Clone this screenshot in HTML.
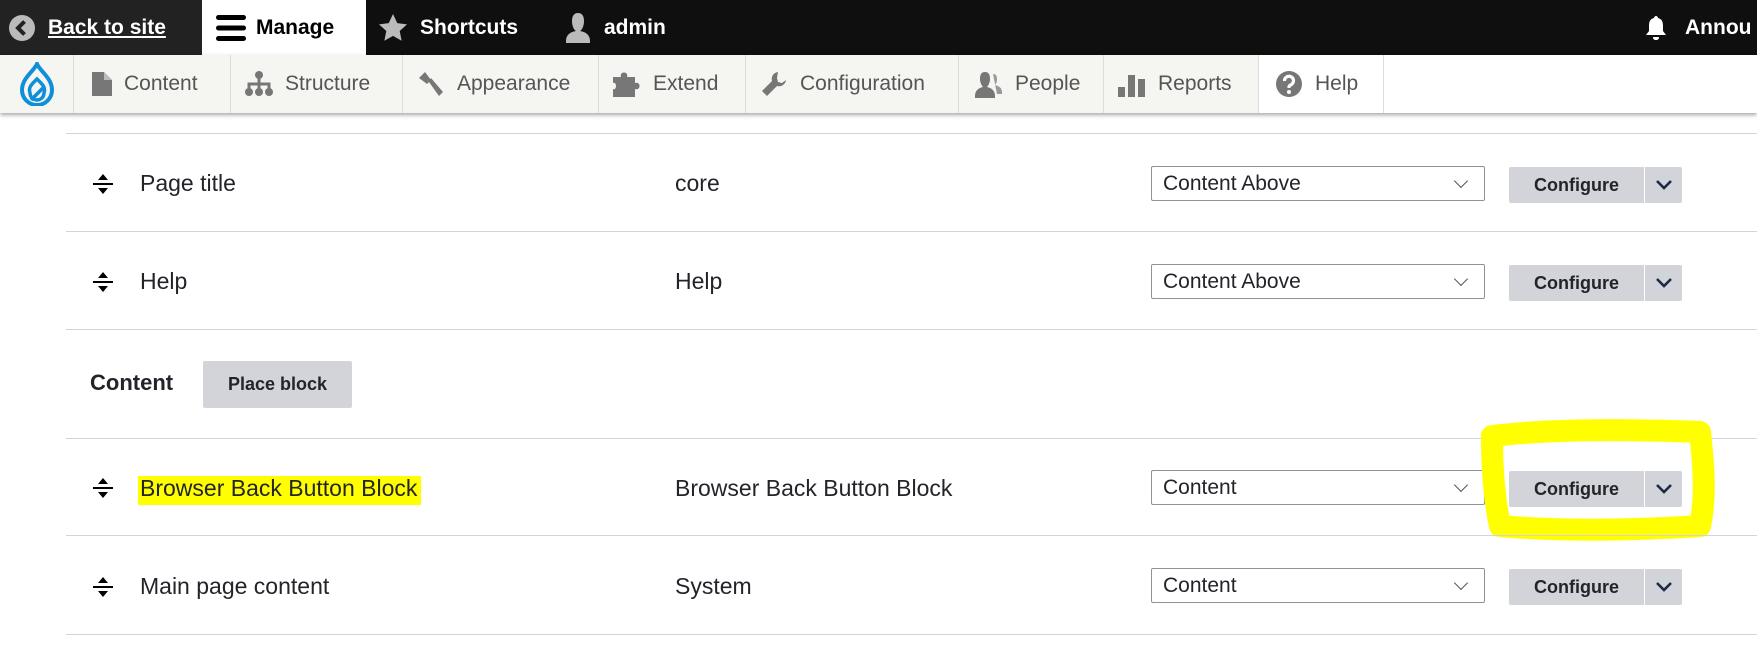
<!DOCTYPE html>
<html><head><meta charset="utf-8"><style>
*{box-sizing:border-box;margin:0;padding:0}
body{width:1757px;height:649px;overflow:hidden;background:#fff;font-family:"Liberation Sans",sans-serif;position:relative;color:#232429}
.abs{position:absolute}
.top{left:0;top:0;width:1757px;height:55px;background:#0f0f0f}
.tb{position:absolute;top:0;height:55px;display:flex;align-items:center;color:#fff;font-weight:bold;font-size:21px}
.nav{left:0;top:55px;width:1757px;height:58px;background:#fff;box-shadow:0 2px 4px rgba(0,0,0,.35)}
.ni{position:absolute;top:55px;height:58px;background:#f5f5f2;border-right:1px solid #ddd;display:flex;align-items:center;color:#555;font-size:21px}
.ni svg{margin-right:12px}
.line{left:66px;width:1691px;height:1px;background:#d4d4d8}
.lab{font-size:23px;color:#232429}
.sel{width:334px;height:35px;border:1px solid #8e929c;border-radius:2px;font-size:21px;padding-left:11px;display:flex;align-items:center;color:#232429}
.sel:after{content:"";position:absolute;right:18px;top:9px;width:9px;height:9px;border-right:1.5px solid #555;border-bottom:1.5px solid #555;transform:rotate(45deg)}
.btn{width:173px;height:36px;background:#d3d4d9;border-radius:2px;font-weight:bold;font-size:18px;display:flex;align-items:center}
.btn .c{width:136px;text-align:center;border-right:1px solid #fff;height:36px;line-height:36px}
.btn .d{flex:1;display:flex;justify-content:center}
.drag{width:20px;height:22px}
</style></head><body>
<div class="abs top"></div>
<div class="tb" style="left:0;width:202px;background:#222;padding-left:8px">
<svg width="28" height="28" viewBox="0 0 28 28"><circle cx="14" cy="14" r="13" fill="#bbb"/><path d="M16.5 7.5 L10 14 L16.5 20.5" stroke="#222" stroke-width="4" fill="none"/></svg>
<span style="margin-left:12px;text-decoration:underline">Back to site</span></div>
<div class="tb" style="left:202px;width:164px;background:#fff;color:#000;padding-left:14px">
<svg width="30" height="26" viewBox="0 0 30 26"><rect y="0" width="30" height="5" rx="2.5"/><rect y="10.5" width="30" height="5" rx="2.5"/><rect y="21" width="30" height="5" rx="2.5"/></svg>
<span style="margin-left:10px">Manage</span></div>
<div class="tb" style="left:378px"><svg width="30" height="28" viewBox="0 0 24 23"><path d="M12 0l3.5 7.5 8 1-6 5.5 1.6 8L12 18l-7.1 4 1.6-8-6-5.5 8-1z" fill="#bbb"/></svg><span style="margin-left:12px">Shortcuts</span></div>
<div class="tb" style="left:564px"><svg width="28" height="30" viewBox="0 0 28 30"><path d="M14 0c4 0 6 3 6 8s-2 9-4 10c6 1 10 4 10 10v2H2v-2c0-6 4-9 10-10-2-1-4-5-4-10s2-8 6-8z" fill="#bbb"/></svg><span style="margin-left:12px">admin</span></div>
<div class="tb" style="left:1645px"><svg width="22" height="26" viewBox="0 0 22 26"><path d="M11 1c1 0 2 1 2 2 4 1 5 4 5 8v5l3 4H1l3-4v-5c0-4 1-7 5-8 0-1 1-2 2-2zM8 22h6c0 2-1 3-3 3s-3-1-3-3z" fill="#fff"/></svg><span style="margin-left:18px">Annou</span></div>

<div class="abs nav"></div>
<div class="ni" style="left:0;width:74px;justify-content:center;background:#f5f5f2">
<svg width="34" height="44" viewBox="0 0 34 44" style="margin:0"><path d="M17 2 C20 9 32 16 32 28 A15 15 0 0 1 2 28 C2 16 14 9 17 2Z" fill="none" stroke="#0f8fd8" stroke-width="4"/><path d="M17 17 C22 22 26 25 24 31 A7 7 0 0 1 10 31 C8 25 12 22 17 17Z" fill="none" stroke="#0f8fd8" stroke-width="3.5"/><path d="M11 38 L23 26" stroke="#0f8fd8" stroke-width="3.5"/></svg></div>
<div class="ni" style="left:74px;width:157px;padding-left:18px"><svg width="20" height="24" viewBox="0 0 20 24"><path d="M0 0h12l8 8v16H0z" fill="#777"/><path d="M12 0v8h8" fill="#bbb"/></svg>Content</div>
<div class="ni" style="left:231px;width:172px;padding-left:14px"><svg width="28" height="26" viewBox="0 0 28 26"><circle cx="14" cy="4" r="4" fill="#777"/><path d="M14 6v8M4 18v-5h20v5M14 14v4" stroke="#777" stroke-width="3" fill="none"/><circle cx="4" cy="21" r="4" fill="#777"/><circle cx="14" cy="21" r="4" fill="#777"/><circle cx="24" cy="21" r="4" fill="#777"/></svg>Structure</div>
<div class="ni" style="left:403px;width:196px;padding-left:14px"><svg width="28" height="28" viewBox="0 0 28 28"><path d="M8 2 L2 8 L10 14 L14 10Z M12 12 L22 26 L26 22 L14 8" fill="#777"/></svg>Appearance</div>
<div class="ni" style="left:599px;width:147px;padding-left:14px"><svg width="28" height="26" viewBox="0 0 28 26"><path d="M0 6h8c-2-6 8-6 6 0h8v6c6-2 6 8 0 6v8H0v-8c4 2 4-8 0-6z" fill="#777"/></svg>Extend</div>
<div class="ni" style="left:746px;width:213px;padding-left:14px"><svg width="28" height="28" viewBox="0 0 28 28"><path d="M18 2 a7 7 0 0 0-6 9 L2 21 l5 5 10-10 a7 7 0 0 0 9-6 l-4 3-4-1-1-4z" fill="#777"/></svg>Configuration</div>
<div class="ni" style="left:959px;width:145px;padding-left:14px"><svg width="30" height="28" viewBox="0 0 30 28"><path d="M12 2c4 0 5 3 5 7s-2 7-3 8c5 1 8 4 8 9v2H2v-2c0-5 3-8 8-9-1-1-3-4-3-8s1-7 5-7z" fill="#777"/><path d="M20 4c3 0 4 2 4 5s-1 5-2 6c4 1 7 3 7 7v2h-5" fill="#999"/></svg>People</div>
<div class="ni" style="left:1104px;width:155px;padding-left:14px"><svg width="28" height="26" viewBox="0 0 28 26"><rect x="0" y="16" width="7" height="10" fill="#777"/><rect x="10" y="4" width="7" height="22" fill="#777"/><rect x="20" y="8" width="7" height="18" fill="#777"/></svg>Reports</div>
<div class="ni" style="left:1259px;width:125px;padding-left:16px;background:#fff"><svg width="28" height="28" viewBox="0 0 28 28"><circle cx="14" cy="14" r="13" fill="#777"/><path d="M9.5 11a4.5 4.5 0 1 1 6 4c-1.5.6-1.5 1.5-1.5 3" stroke="#fff" stroke-width="3.2" fill="none"/><circle cx="14" cy="22" r="2" fill="#fff"/></svg>Help</div>

<div class="abs line" style="top:133px"></div>

<svg class="abs drag" style="left:93px;top:173px" viewBox="0 0 20 22"><path d="M10 1l5 6H5z M10 21l5-6H5z"/><rect x="0" y="10" width="20" height="2"/></svg>
<div class="abs lab" style="left:140px;top:170px">Page title</div>
<div class="abs lab" style="left:675px;top:170px">core</div>
<div class="abs sel" style="left:1151px;top:166px">Content Above</div>
<div class="abs btn" style="left:1509px;top:167px"><div class="c">Configure</div><div class="d"><svg width="16" height="10" viewBox="0 0 16 10"><path d="M1 1l7 7 7-7" stroke="#1e2a44" stroke-width="2.6" fill="none"/></svg></div></div>
<div class="abs line" style="top:231px"></div>

<svg class="abs drag" style="left:93px;top:271px" viewBox="0 0 20 22"><path d="M10 1l5 6H5z M10 21l5-6H5z"/><rect x="0" y="10" width="20" height="2"/></svg>
<div class="abs lab" style="left:140px;top:268px">Help</div>
<div class="abs lab" style="left:675px;top:268px">Help</div>
<div class="abs sel" style="left:1151px;top:264px">Content Above</div>
<div class="abs btn" style="left:1509px;top:265px"><div class="c">Configure</div><div class="d"><svg width="16" height="10" viewBox="0 0 16 10"><path d="M1 1l7 7 7-7" stroke="#1e2a44" stroke-width="2.6" fill="none"/></svg></div></div>
<div class="abs line" style="top:329px"></div>

<div class="abs" style="left:90px;top:370px;font-size:22px;font-weight:bold">Content</div>
<div class="abs" style="left:203px;top:361px;width:149px;height:47px;background:#d3d4d9;border-radius:2px;font-weight:bold;font-size:18px;text-align:center;line-height:47px">Place block</div>
<div class="abs line" style="top:438px"></div>

<svg class="abs drag" style="left:93px;top:477px" viewBox="0 0 20 22"><path d="M10 1l5 6H5z M10 21l5-6H5z"/><rect x="0" y="10" width="20" height="2"/></svg>
<div class="abs" style="left:138px;top:476px;width:283px;height:29px;background:#ffff00"></div>
<div class="abs lab" style="left:140px;top:475px">Browser Back Button Block</div>
<div class="abs lab" style="left:675px;top:475px">Browser Back Button Block</div>
<div class="abs sel" style="left:1151px;top:470px">Content</div>
<div class="abs btn" style="left:1509px;top:471px"><div class="c">Configure</div><div class="d"><svg width="16" height="10" viewBox="0 0 16 10"><path d="M1 1l7 7 7-7" stroke="#1e2a44" stroke-width="2.6" fill="none"/></svg></div></div>
<svg class="abs" style="left:1478px;top:418px" width="240" height="126" viewBox="0 0 240 126"><path d="M14 18 C80 10 170 12 222 14 C226 50 228 80 222 108 C160 112 90 114 22 108 C16 80 14 50 14 18Z" fill="none" stroke="#ffff00" stroke-width="22" stroke-linejoin="round"/></svg>
<div class="abs line" style="top:535px"></div>

<svg class="abs drag" style="left:93px;top:576px" viewBox="0 0 20 22"><path d="M10 1l5 6H5z M10 21l5-6H5z"/><rect x="0" y="10" width="20" height="2"/></svg>
<div class="abs lab" style="left:140px;top:573px">Main page content</div>
<div class="abs lab" style="left:675px;top:573px">System</div>
<div class="abs sel" style="left:1151px;top:568px">Content</div>
<div class="abs btn" style="left:1509px;top:569px"><div class="c">Configure</div><div class="d"><svg width="16" height="10" viewBox="0 0 16 10"><path d="M1 1l7 7 7-7" stroke="#1e2a44" stroke-width="2.6" fill="none"/></svg></div></div>
<div class="abs line" style="top:634px"></div>
</body></html>
